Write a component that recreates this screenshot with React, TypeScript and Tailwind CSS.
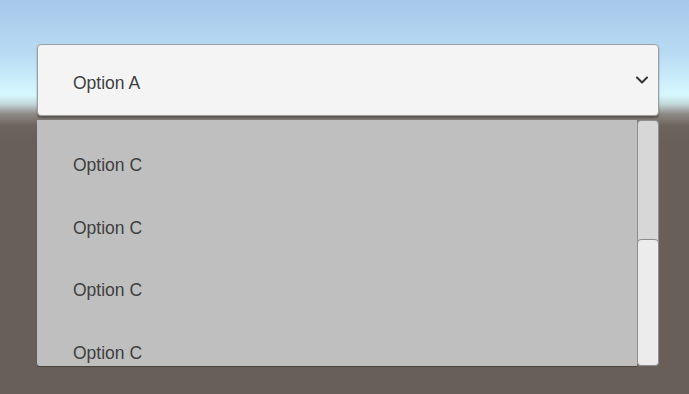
const OPTIONS = ["Option C", "Option C", "Option C", "Option C"];

const font = { fontFamily: '"Liberation Sans", Arial, sans-serif' };

export default function App() {
  return (
    <div
      className="h-[394px] w-full overflow-hidden bg-[linear-gradient(to_bottom,#a6c7ea_0px,#b9dcf4_55px,#d6f8ff_95px,#c3d8da_104px,#8e8a86_114px,#6c645e_126px,#675f58_142px)] pt-[44px] pl-[37px] pr-[30px]"
      style={font}
    >
      <div className="flex h-[72px] items-center justify-between rounded-[4px] border border-[#9e9e9e] bg-[#f4f4f4] pl-[35px] pr-[10px] shadow-[0_2px_2px_rgba(0,0,0,0.35)]">
        <span className="pt-[6px] text-[17.5px] text-[#404040]">Option A</span>
        <svg width="12" height="8" viewBox="0 0 12 8" fill="none">
          <path
            d="M1 1.5 L6 6.5 L11 1.5"
            stroke="#333"
            strokeWidth="2"
            strokeLinecap="round"
            strokeLinejoin="round"
          />
        </svg>
      </div>

      <div className="mt-[4px] flex h-[246px]">
        <ul className="flex-1 overflow-hidden rounded-bl-[3px] bg-[#bfbfbf] pt-[14px] shadow-[0_1px_1px_rgba(0,0,0,0.3)]">
          {OPTIONS.map((label, i) => (
            <li
              key={i}
              className="flex h-[62.5px] shrink-0 items-center pl-[36px] text-[17.5px] text-[#404040]"
            >
              {label}
            </li>
          ))}
        </ul>
        <div className="flex w-[22px] flex-col rounded-[4px] border border-[#8e8e8e] bg-[#d7d7d7]">
          <div className="flex-1" />
          <div className="-mx-px -mb-px h-[127px] rounded-[4px] border border-[#8e8e8e] bg-[#ececec]" />
        </div>
      </div>
    </div>
  );
}
